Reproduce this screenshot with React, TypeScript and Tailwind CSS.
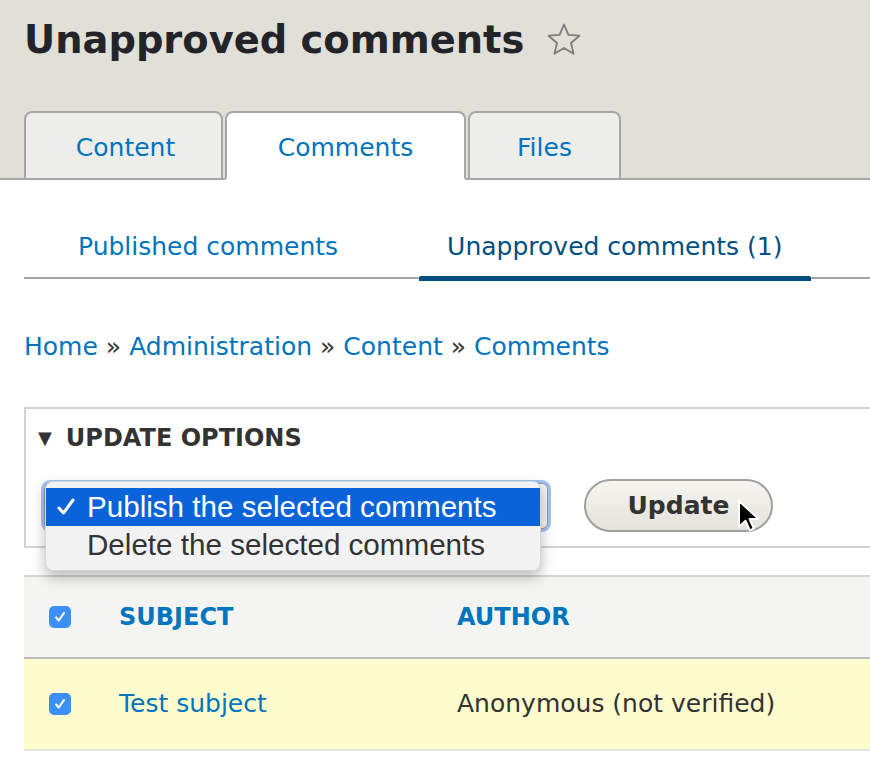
import React from "react";

const Check = () => (
  <span className="flex h-[22px] w-[22px] items-center justify-center rounded-[5px] bg-[#3b8ff6]">
    <svg viewBox="0 0 16 16" className="h-[14px] w-[14px]" fill="none" stroke="white" strokeWidth="2.4" strokeLinecap="round" strokeLinejoin="round">
      <path d="M3.5 8.5l3 3.5 6-8.5" />
    </svg>
  </span>
);

const Star = () => (
  <svg viewBox="0 0 36 36" className="ml-[22px] h-[36px] w-[36px]" fill="none" stroke="#7d7c76" strokeWidth="1.8" strokeLinejoin="round">
    <path d="M18 2.5l4.4 10.3 11 .9-8.4 7.3 2.6 10.8L18 26l-9.6 5.8L11 21 2.6 13.7l11-.9z" />
  </svg>
);

const Cursor = () => (
  <svg viewBox="0 0 22 34" className="h-[34px] w-[22px]">
    <path d="M2 2v26l6.5-6.3 4.3 9.6 4-1.8-4.2-9.4h9z" fill="black" stroke="white" strokeWidth="2" strokeLinejoin="round" />
  </svg>
);

export default function App() {
  return (
    <div className="h-[780px] w-[870px] overflow-hidden bg-white font-['DejaVu_Sans',sans-serif] text-[#333]">
      {/* Page header */}
      <header className="border-b-2 border-[#a6a6a6] bg-[#e0e0d8] pl-[24px] pt-[18px]">
        <div className="flex h-[44px] items-center">
          <h1 className="text-[38.4px] font-bold leading-[44px] text-[#232429]">Unapproved comments</h1>
          <Star />
        </div>
        <nav className="mt-[49px] -mb-[2px] flex gap-[2px] text-[25px] text-[#0074bd]">
          <a className="flex h-[69px] w-[199px] items-center justify-center rounded-t-[8px] border-2 border-[#a6a6a6] bg-[#ededea] pt-[4px] pl-[4px]">Content</a>
          <a className="flex h-[69px] w-[241px] items-center justify-center rounded-t-[8px] border-2 border-[#a6a6a6] border-b-white bg-white pt-[4px]">Comments</a>
          <a className="flex h-[69px] w-[153px] items-center justify-center rounded-t-[8px] border-2 border-[#a6a6a6] bg-[#ededea] pt-[4px]">Files</a>
        </nav>
      </header>

      {/* Secondary tabs */}
      <ul className="ml-[24px] mt-[52px] flex border-b-2 border-[#a6a6a6] pl-[26px] text-[25px] leading-[30px]">
        <li className="px-[28px] pb-[15px] text-[#0074bd]">Published comments</li>
        <li className="relative ml-[53px] px-[28px] pb-[15px] text-[#004f80]">
          Unapproved comments (1)
          <span className="absolute -bottom-[4px] left-0 right-0 h-[5px] rounded-t-[2px] bg-[#004f80]" />
        </li>
      </ul>

      {/* Breadcrumb */}
      <div className="ml-[24px] mt-[53px] flex gap-[8px] text-[25px] leading-[30px]">
        <a className="text-[#0074bd]">Home</a>
        <span className="text-[#333]">»</span>
        <a className="text-[#0074bd]">Administration</a>
        <span className="text-[#333]">»</span>
        <a className="text-[#0074bd]">Content</a>
        <span className="text-[#333]">»</span>
        <a className="text-[#0074bd]">Comments</a>
      </div>

      {/* Update options */}
      <fieldset className="ml-[24px] mt-[45px] w-[870px] border-2 border-[#d3d3d3] pb-[14px] pl-[12px] pt-[14px]">
        <div className="flex items-center gap-[14px] text-[24px] font-bold leading-[30px] text-[#333]">
          <span className="text-[18px]">▼</span>
          <span>UPDATE OPTIONS</span>
        </div>
        <div className="mt-[26px] flex h-[53px] items-center">
          <div className="relative ml-[6px] h-[46px] w-[504px] rounded-[6px] border border-[#9a9a9a] bg-[#f4f4f4] shadow-[0_0_0_3px_rgba(80,150,240,0.55)]">
            <div className="absolute left-0 top-[-3px] z-10 w-[496px] rounded-[8px] border border-[#d6d6d6] bg-[#f2f2f2] py-[6px] font-['Liberation_Sans',Arial,sans-serif] text-[29.6px] leading-[38px] shadow-[0_6px_14px_rgba(0,0,0,0.28)]">
              <div className="flex items-center bg-[#0a63d8] text-white">
                <span className="flex w-[41px] pl-[10px]">
                  <svg viewBox="0 0 20 20" className="h-[20px] w-[20px]" fill="none" stroke="white" strokeWidth="3" strokeLinecap="round" strokeLinejoin="round">
                    <path d="M3 11l4.5 5L17 3" />
                  </svg>
                </span>
                <span>Publish the selected comments</span>
              </div>
              <div className="flex items-center text-[#333]">
                <span className="w-[41px]" />
                <span>Delete the selected comments</span>
              </div>
            </div>
          </div>
          <div className="relative ml-[36px]">
            <button className="h-[53px] w-[189px] rounded-full border-2 border-[#a0a0a0] bg-gradient-to-b from-[#f6f5f0] to-[#e4e2da] text-[25px] font-bold text-[#333]">
              Update
            </button>
            <span className="absolute left-[153px] top-[20px]">
              <Cursor />
            </span>
          </div>
        </div>
      </fieldset>

      {/* Table */}
      <table className="ml-[24px] mt-[27px] w-[846px] border-collapse text-left text-[25px]">
        <thead>
          <tr className="h-[82px] border-y-2 border-t-[#d5d5d5] border-b-[#bebebe] bg-[#f4f4f2]">
            <th className="w-[95px] pl-[25px]"><Check /></th>
            <th className="w-[338px] text-[24px] font-bold text-[#0074bd]">SUBJECT</th>
            <th className="text-[24px] font-bold text-[#0074bd]">AUTHOR</th>
          </tr>
        </thead>
        <tbody>
          <tr className="h-[92px] border-b-2 border-[#e6e3dc] bg-[#fefccc]">
            <td className="pl-[25px]"><Check /></td>
            <td className="text-[#0074bd]">Test subject</td>
            <td className="text-[#333]">Anonymous (not verified)</td>
          </tr>
        </tbody>
      </table>
    </div>
  );
}
